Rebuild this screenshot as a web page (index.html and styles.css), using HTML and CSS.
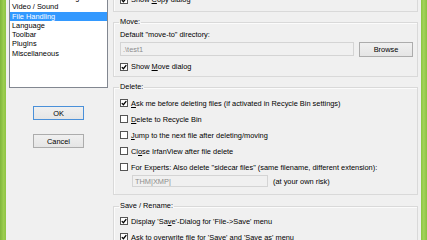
FILE: index.html
```html
<!DOCTYPE html>
<html lang="en">
<head>
  <meta charset="UTF-8">
  <title>Properties - File Handling</title>
  <link rel="stylesheet" href="styles.css">
</head>
<body>
  <div class="frame">
    <div class="edge left-edge"></div>
    <div class="dialog">
      <div class="side">
        <ul class="tree">
          <li>Zoom / Color management</li>
          <li>Video / Sound</li>
          <li class="sel">File Handling</li>
          <li>Language</li>
          <li>Toolbar</li>
          <li>PlugIns</li>
          <li>Miscellaneous</li>
        </ul>
        <div class="buttons">
          <button class="btn default">OK</button>
          <button class="btn">Cancel</button>
        </div>
      </div>

      <div class="pages">
        <fieldset class="group copy">
          <legend>Copy:</legend>
          <div class="label-row">Default "copy-to" directory:</div>
          <div class="field-row">
            <input class="field" type="text" value=".\test1" disabled>
            <button class="btn browse">Browse</button>
          </div>
          <label class="check-row tall"><span class="check on"></span><span>Show <u>C</u>opy dialog</span></label>
        </fieldset>

        <fieldset class="group">
          <legend>Move:</legend>
          <div class="label-row">Default "move-to" directory:</div>
          <div class="field-row">
            <input class="field" type="text" value=".\test1" disabled>
            <button class="btn browse">Browse</button>
          </div>
          <label class="check-row tall"><span class="check on"></span><span>Show <u>M</u>ove dialog</span></label>
        </fieldset>

        <fieldset class="group delete">
          <legend>Delete:</legend>
          <label class="check-row"><span class="check on"></span><span><u>A</u>sk me before deleting files (if activated in Recycle Bin settings)</span></label>
          <label class="check-row"><span class="check"></span><span><u>D</u>elete to Recycle Bin</span></label>
          <label class="check-row"><span class="check"></span><span><u>J</u>ump to the next file after deleting/moving</span></label>
          <label class="check-row"><span class="check"></span><span>Cl<u>o</u>se IrfanView after file delete</span></label>
          <label class="check-row"><span class="check"></span><span>For Experts: Also delete "sidecar files" (same filename, different extension):</span></label>
          <div class="sidecar-row">
            <input class="field small" type="text" value="THM|XMP|" disabled>
            <span>(at your own risk)</span>
          </div>
        </fieldset>

        <fieldset class="group save">
          <legend>Save / Rename:</legend>
          <label class="check-row"><span class="check on"></span><span>Display 'Sa<u>v</u>e'-Dialog for 'File-&gt;Save' menu</span></label>
          <label class="check-row"><span class="check on"></span><span><u>A</u>sk to overwrite file for 'Save' and 'Save as' menu</span></label>
        </fieldset>
      </div>
    </div>
    <div class="edge right-edge"></div>
  </div>
</body>
</html>
```

FILE: styles.css
```css
body, html {
  margin: 0;
  padding: 0;
  width: 427px;
  height: 240px;
  overflow: hidden;
  font-family: 'Liberation Sans', Arial, sans-serif;
  font-size: 7.4px;
  color: #000;
  background-color: #f0f0f0;
}

.frame {
  display: flex;
  height: 240px;
}

.edge {
  width: 6px;
  flex: none;
}

.left-edge {
  background: linear-gradient(90deg, #7fb63a, #9ccd50 60%, #8ec443);
}

.right-edge {
  background: linear-gradient(90deg, #8cc540, #a4d35b 45%, #8bc23f);
}

.dialog {
  flex: 1;
  display: flex;
  gap: 5px;
  padding: 0 3px;
  background-color: #f0f0f0;
}

/* left column: page list + buttons */
.side {
  width: 99px;
  flex: none;
  margin-top: -9px;
}

.tree {
  box-sizing: border-box;
  height: 97px;
  margin: 0;
  padding: 1px 0 0;
  list-style: none;
  background: #fff;
  border: 1px solid #828790;
}

.tree li {
  height: 9.3px;
  line-height: 9.3px;
  padding-left: 2px;
  white-space: nowrap;
}

.tree li.sel {
  background: #3399ff;
  color: #fff;
}

.buttons {
  display: flex;
  flex-direction: column;
  align-items: center;
  gap: 14px;
  padding-top: 18px;
}

.btn {
  box-sizing: border-box;
  width: 51px;
  height: 14px;
  padding: 0;
  font-family: inherit;
  font-size: 7.4px;
  color: #000;
  background: linear-gradient(#f0f0f0, #e5e5e5);
  border: 1px solid #acacac;
}

.btn.default {
  border-color: #4a90d9;
}

/* right column: group boxes */
.pages {
  width: 305px;
  flex: none;
  margin-top: -50px;
}

.group {
  min-width: 0;
  margin: 5px 0 0;
  padding: 0 4px 0 6px;
  border: 1px solid #d9d9d9;
  box-shadow: inset 1px 1px #fbfbfb;
}

.group.copy {
  margin-top: 0;
  padding-bottom: 2px;
}

.group.delete {
  padding-top: 3px;
  padding-bottom: 7px;
}

.group.save {
  margin-top: 6px;
  padding-top: 2px;
}

.group legend {
  height: 10px;
  line-height: 10px;
  padding: 0 1px;
  margin-left: -1px;
}

.label-row {
  height: 15px;
  display: flex;
  align-items: center;
}

.field-row {
  display: flex;
  gap: 5px;
}

.field {
  box-sizing: border-box;
  flex: 1;
  min-width: 0;
  height: 14px;
  padding: 0 2px;
  font-family: inherit;
  font-size: 7.4px;
  color: #8d8d8d;
  background: #f0f0f0;
  border: 1px solid #d4d4d4;
}

.btn.browse {
  width: 54px;
  height: 15px;
}

.check-row {
  height: 16px;
  display: flex;
  align-items: center;
  gap: 3px;
  white-space: nowrap;
}

.check-row.tall {
  height: 19px;
}

.check {
  box-sizing: border-box;
  width: 8px;
  height: 8px;
  flex: none;
  background: #fff;
  border: 1px solid #555;
}

.check.on {
  background: #fff url("data:image/svg+xml,%3Csvg xmlns='http://www.w3.org/2000/svg' viewBox='0 0 6 6'%3E%3Cpath d='M0.8 3.1 L2.4 4.7 L5.3 1.1' fill='none' stroke='%23000' stroke-width='1.3'/%3E%3C/svg%3E") center / 6px 6px no-repeat;
}

.sidecar-row {
  display: flex;
  align-items: center;
  gap: 5px;
  padding-left: 12px;
  height: 12px;
}

.field.small {
  flex: none;
  width: 136px;
  height: 12px;
}

u {
  text-decoration-thickness: 1px;
}
```
